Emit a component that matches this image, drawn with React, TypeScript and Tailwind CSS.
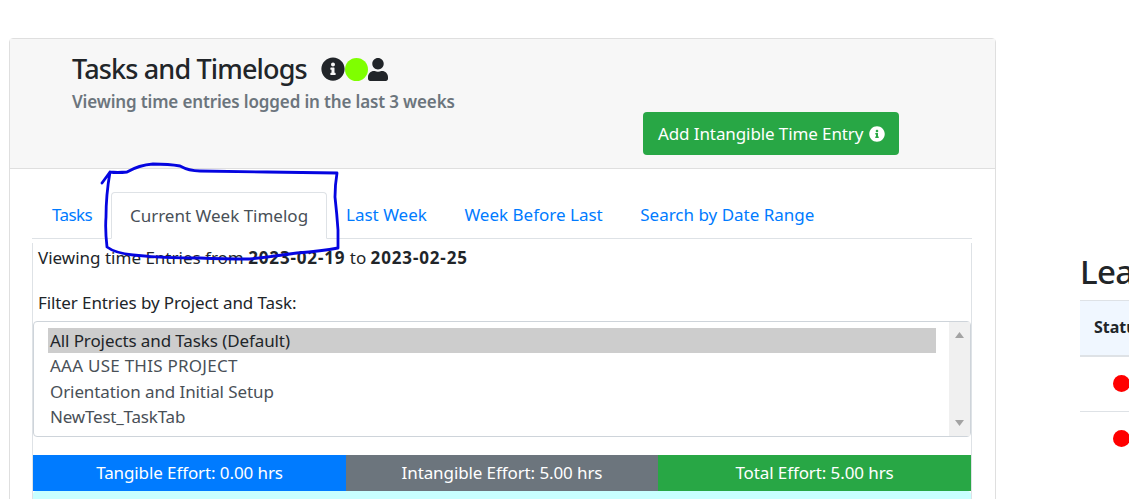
import { FaInfoCircle, FaUser } from 'react-icons/fa';

const tabs = ['Last Week', 'Week Before Last', 'Search by Date Range'];
const options = [
  { label: 'AAA USE THIS PROJECT', className: 'tracking-[0.25px]' },
  { label: 'Orientation and Initial Setup', className: 'tracking-[-0.1px]' },
  { label: 'NewTest_TaskTab', className: 'tracking-[-0.2px]' },
];

function ScrollArrow({ up }: { up?: boolean }) {
  return (
    <svg width="9" height="6" viewBox="0 0 9 6" className="fill-[#a3a3a3]">
      <path d={up ? 'M4.5 0L9 6H0Z' : 'M0 0H9L4.5 6Z'} />
    </svg>
  );
}

function HandDrawnCircle() {
  return (
    <svg width="250" height="105" viewBox="0 0 250 105" fill="none" className="absolute left-[97px] top-[160px] stroke-[#0505e0]">
      <path
        strokeWidth="2.8"
        strokeLinecap="round"
        strokeLinejoin="round"
        d="M5 23L13 12Q20 13 30 12Q42 5 56 4Q72 4 83 6Q92 11 103 11L170 12L240 13Q238 25 238 37Q240 55 241 70L241 88Q225 91 200 93Q170 97 153 99Q125 99 103 98Q65 98 36 95Q18 93 10 87Q8 70 9 57Q9 35 13 12"
      />
    </svg>
  );
}

export default function App() {
  return (
    <div className="relative flex h-[499px] w-[1129px] overflow-hidden bg-white font-['Noto_Sans',sans-serif] text-[17px] leading-[24px] text-[#212529]">
      <div className="ml-[9px] mt-[38px] h-[600px] w-[987px] shrink-0 rounded border border-[#dfdfdf]">
        <div className="flex h-[130px] flex-col border-b border-[#dfdfdf] bg-[#f7f7f7] pl-[62px] pr-[96px]">
          <div className="mt-[11px] flex items-center">
            <h2 className="text-[27px] leading-[38px] font-medium tracking-[-0.85px]">Tasks and Timelogs</h2>
            <div className="ml-[14px] flex items-center">
              <FaInfoCircle className="h-[24px] w-[24px]" />
              <span className="h-[23px] w-[23px] rounded-full bg-[#7fff00]" />
              <FaUser className="h-[23px] w-[20px]" />
            </div>
          </div>
          <p className="mt-[2px] text-[17px] leading-[24px] font-semibold tracking-[-0.15px] text-[#6c757d]">Viewing time entries logged in the last 3 weeks</p>
          <button className="mt-[-2px] flex h-[43px] w-[256px] items-center gap-[6px] self-end rounded bg-[#28a745] pl-[15px] tracking-[-0.1px] text-white">
            Add Intangible Time Entry
            <FaInfoCircle className="h-[16px] w-[16px]" />
          </button>
        </div>
        <div className="pl-[22px] pr-[24px] pt-[23px]">
          <div className="flex h-[47px] w-[940px] items-end border-b border-[#dee2e6] text-[#007bff]">
            <a className="flex h-[46px] w-[79px] items-center pl-[20px] tracking-[-0.6px]">Tasks</a>
            <a className="mb-[-1px] flex h-[47px] w-[216px] items-center justify-center rounded-t border border-b-white border-[#dee2e6] bg-white text-[#495057]">
              Current Week Timelog
            </a>
            <div className="flex gap-[37.5px] pl-[19px]">
              {tabs.map((tab) => (
                <a key={tab} className="flex h-[46px] items-center">{tab}</a>
              ))}
            </div>
          </div>
          <div className="mt-[4px] w-[940px] border-x border-[#dee2e6]">
            <p className="pl-[5px] pt-[3px]">
              Viewing time Entries from <b className="tracking-[0.85px]">2023-02-19</b> to <b className="tracking-[0.85px]">2023-02-25</b>
            </p>
            <p className="mt-[21px] pl-[5px] tracking-[-0.1px]">Filter Entries by Project and Task:</p>
            <div className="mt-[6px] flex h-[116px] rounded border border-[#ced4da] text-[#495057]">
              <div className="flex-1 pl-[14px] pt-[6px]">
                <div className="h-[25px] w-[888px] bg-[#cdcdcd] pl-[2px] leading-[25px] tracking-[-0.1px] text-[#212529]">All Projects and Tasks (Default)</div>
                {options.map((option) => (
                  <div key={option.label} className={`h-[25.5px] pl-[2px] leading-[25.5px] ${option.className}`}>{option.label}</div>
                ))}
              </div>
              <div className="flex w-[21px] flex-col items-center justify-between bg-[#f0f0f0] py-[10px]">
                <ScrollArrow up />
                <ScrollArrow />
              </div>
            </div>
            <div className="mt-[18px] flex h-[36px] text-center leading-[36px] tracking-[-0.1px] text-white">
              <div className="w-[313px] bg-[#007bff]">Tangible Effort: 0.00 hrs</div>
              <div className="w-[312px] bg-[#6c757d]">Intangible Effort: 5.00 hrs</div>
              <div className="w-[313px] bg-[#28a745]">Total Effort: 5.00 hrs</div>
            </div>
            <div className="h-[40px] rounded-t bg-[#c8ffff]" />
          </div>
        </div>
      </div>
      <div className="ml-[84px] mt-[253px] w-[300px] shrink-0">
        <h2 className="text-[33px] leading-[38px] font-medium tracking-[-0.6px]">Leaderboard</h2>
        <div className="mt-[9px] h-[57px] border-y border-b-2 border-[#dee2e6] bg-[#f0f7ff] pl-[14px] text-[16px] font-bold leading-[52px]">Status</div>
        <div className="flex h-[55px] items-center border-b border-[#dee2e6] pb-[2px] pl-[33px]">
          <span className="h-[17px] w-[17px] rounded-full bg-[#ff0000]" />
        </div>
        <div className="flex h-[55px] items-center pb-[3px] pl-[33px]">
          <span className="h-[17px] w-[17px] rounded-full bg-[#ff0000]" />
        </div>
      </div>
      <HandDrawnCircle />
    </div>
  );
}
